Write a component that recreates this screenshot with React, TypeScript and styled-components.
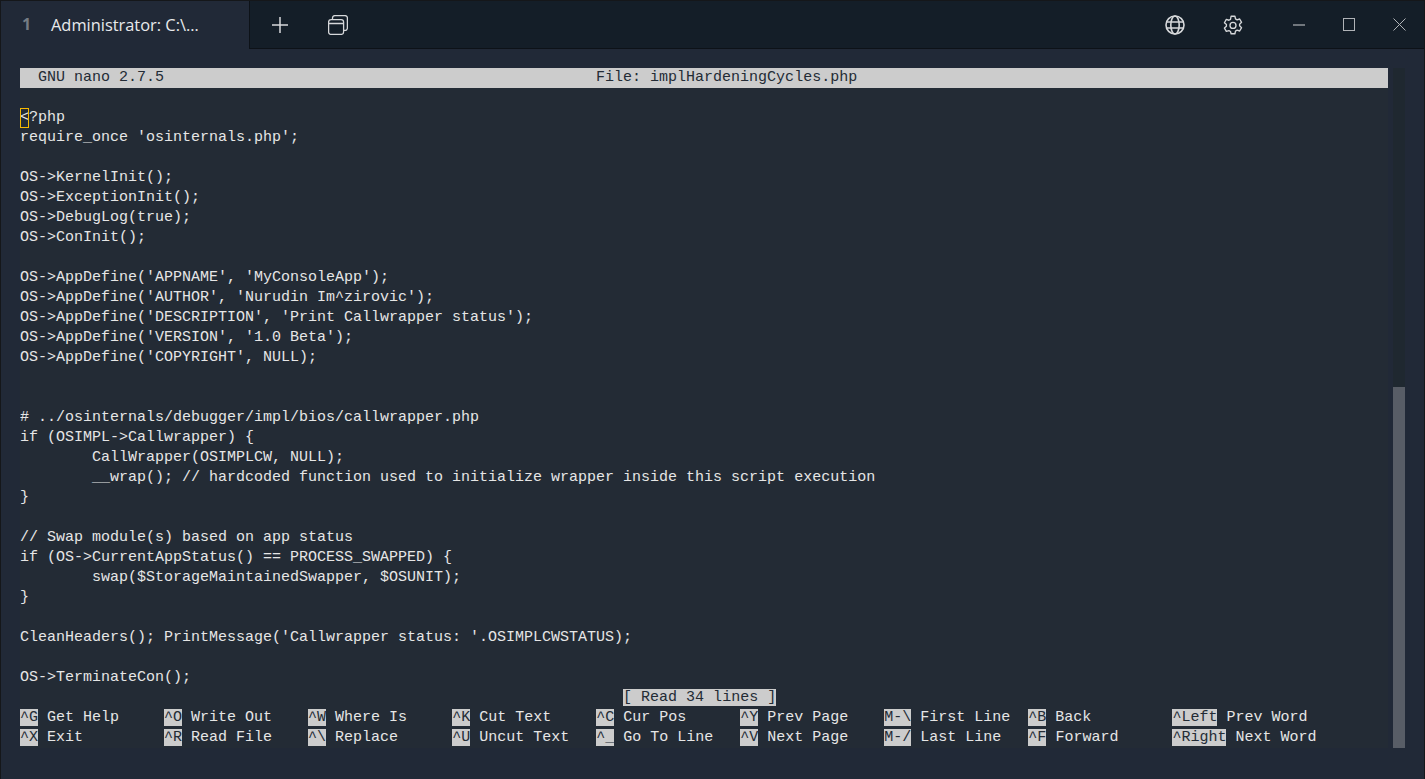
import React from "react";
import styled, { createGlobalStyle } from "styled-components";

const Global = createGlobalStyle`
  html, body { margin: 0; padding: 0; height: 100%; background: #212937; overflow: hidden; }
  #root { height: 100%; }
`;

const Window = styled.div`
  width: 1425px; height: 779px; display: flex; flex-direction: column;
  background: #212937; box-sizing: border-box; border: 1px solid #15171a; border-bottom: 0;
  overflow: hidden; font-family: "Liberation Sans", sans-serif;
`;
const TitleBar = styled.header`
  height: 48px; display: flex; align-items: stretch; background: #141e28; flex: none;
`;
const ActiveTab = styled.div`
  width: 249px; height: 48px; display: flex; align-items: center; background: #212937;
  border-right: 1px solid #0d1218; box-sizing: border-box; padding-left: 21px;
`;
const TabIndex = styled.span`
  color: #757c84; font: 700 16px "Open Sans", sans-serif; width: 29px; position: relative; top: -1px;
`;
const TabTitle = styled.span`
  color: #e8eaec; font: 400 16.4px "Open Sans", sans-serif; white-space: nowrap; position: relative; top: -1px;
`;
const IconButton = styled.button<{ $w: number }>`
  width: ${p => p.$w}px; height: 47px; padding: 0; border: 0; background: transparent;
  display: flex; align-items: center; justify-content: center; color: #d6d8da;
`;
const Spacer = styled.div`flex: 1; border-bottom: 1px solid #0d1218;`;
const LeftTools = styled.div`display: flex; border-bottom: 1px solid #0d1218;`;
const RightTools = styled.div`display: flex; border-bottom: 1px solid #0d1218;`;
const WindowControls = styled.div`display: flex; margin-left: 12px;`;
const Body = styled.main`
  flex: 1; display: flex; padding: 19px 19px 31px 19px; gap: 5px; min-height: 0;
`;
const Terminal = styled.pre`
  margin: 0; width: 1368px; height: 680px; flex: none; overflow: hidden;
  background: #232b35; color: #e6e6e6;
  font: 15px/20px "Liberation Mono", monospace;
`;
const Line = styled.div`height: 20px; white-space: pre; position: relative;`;
const TitleLine = styled(Line)`background: #cccccc; color: #232b35;`;
const Inv = styled.span`background: #cccccc; color: #232b35;`;
const Cursor = styled.span`
  outline: 1px solid #f5b800; outline-offset: -1px; display: inline-block; width: 9px; height: 20px;
`;
const Scrollbar = styled.div`
  width: 12px; height: 680px; flex: none; background: #1f2830; display: flex; flex-direction: column; justify-content: flex-end;
`;
const Thumb = styled.div`height: 361px; background: #585d66;`;

const code = `
<?php
require_once 'osinternals.php';

OS->KernelInit();
OS->ExceptionInit();
OS->DebugLog(true);
OS->ConInit();

OS->AppDefine('APPNAME', 'MyConsoleApp');
OS->AppDefine('AUTHOR', 'Nurudin Im^zirovic');
OS->AppDefine('DESCRIPTION', 'Print Callwrapper status');
OS->AppDefine('VERSION', '1.0 Beta');
OS->AppDefine('COPYRIGHT', NULL);


# ../osinternals/debugger/impl/bios/callwrapper.php
if (OSIMPL->Callwrapper) {
        CallWrapper(OSIMPLCW, NULL);
        __wrap(); // hardcoded function used to initialize wrapper inside this script execution
}

// Swap module(s) based on app status
if (OS->CurrentAppStatus() == PROCESS_SWAPPED) {
        swap($StorageMaintainedSwapper, $OSUNIT);
}

CleanHeaders(); PrintMessage('Callwrapper status: '.OSIMPLCWSTATUS);

OS->TerminateCon();`.split("\n");

const row1: [string, string][] = [["^G","Get Help"],["^O","Write Out"],["^W","Where Is"],["^K","Cut Text"],["^C","Cur Pos"],["^Y","Prev Page"],["M-\\","First Line"],["^B","Back"],["^Left","Prev Word"]];
const row2: [string, string][] = [["^X","Exit"],["^R","Read File"],["^\\","Replace"],["^U","Uncut Text"],["^_","Go To Line"],["^V","Next Page"],["M-/","Last Line"],["^F","Forward"],["^Right","Next Word"]];

const Shortcuts = ({ items }: { items: [string, string][] }) => (
  <Line>
    {items.map(([k, label], i) => {
      const text = " " + label;
      const used = k.length + text.length;
      const pad = i === items.length - 1 ? "" : " ".repeat(Math.max(0, 16 - used));
      return <React.Fragment key={k}><Inv>{k}</Inv>{text}{pad}</React.Fragment>;
    })}
  </Line>
);

export default function App() {
  return (
    <Window>
      <Global />
      <TitleBar>
        <ActiveTab><TabIndex>1</TabIndex><TabTitle>Administrator: C:\…</TabTitle></ActiveTab>
        <LeftTools>
          <IconButton $w={60}>
            <svg width="16" height="16" viewBox="0 0 16 16" stroke="currentColor" strokeWidth="1.5" fill="none"><path d="M8 0v16M0 8h16" /></svg>
          </IconButton>
          <IconButton $w={56}>
            <svg width="20" height="20" viewBox="0 0 20 20" stroke="currentColor" strokeWidth="1.3" fill="none">
              <rect x="0.6" y="4.600" width="15" height="14.800" rx="2.500" />
              <path d="M0.6 8.500h15M4.500 4.500V3a2.400 2.400 0 0 1 2.400-2.400h10A2.400 2.400 0 0 1 19.400 3v10a2.400 2.400 0 0 1-2.400 2.400h-1.400" />
            </svg>
          </IconButton>
        </LeftTools>
        <Spacer />
        <RightTools>
          <IconButton $w={58}>
            <svg width="20" height="20" viewBox="0 0 20 20" stroke="currentColor" strokeWidth="1.6" fill="none">
              <circle cx="10" cy="10" r="9" /><ellipse cx="10" cy="10" rx="4.200" ry="9" /><path d="M1.500 7h17M1.500 13h17" />
            </svg>
          </IconButton>
          <IconButton $w={58}>
            <svg width="20" height="20" viewBox="0 0 24 24" stroke="currentColor" strokeWidth="1.6" fill="none" strokeLinecap="round" strokeLinejoin="round">
              <path d="M9.700 1.500h4.600l.7 3.200 1.900 1.100 3.100-1 2.300 4-2.400 2.200v2l2.400 2.200-2.300 4-3.100-1-1.900 1.100-.7 3.200H9.700L9 19.800l-1.900-1.100-3.100 1-2.300-4 2.400-2.200v-2L1.700 9.300l2.300-4 3.100 1L9 5.200z" />
              <circle cx="12" cy="12.500" r="3.600" />
            </svg>
          </IconButton>
          <WindowControls>
            <IconButton $w={50}>
              <svg width="12" height="2" viewBox="0 0 12 2"><path d="M0 1h12" stroke="#9a9ea3" strokeWidth="1.4" /></svg>
            </IconButton>
            <IconButton $w={50}>
              <svg width="12" height="13" viewBox="0 0 12 13" fill="none"><rect x="0.5" y="0.5" width="11" height="12" stroke="#b0b3b7" strokeWidth="1" /></svg>
            </IconButton>
            <IconButton $w={50}>
              <svg width="13" height="13" viewBox="0 0 13 13" fill="none"><path d="M0.500 0.500l12 12M12.500 0.500l-12 12" stroke="#b0b3b7" strokeWidth="1" /></svg>
            </IconButton>
          </WindowControls>
        </RightTools>
      </TitleBar>
      <Body>
        <Terminal>
          <TitleLine>{"  GNU nano 2.7.5" + " ".repeat(48) + "File: implHardeningCycles.php"}</TitleLine>
          {code.map((l, i) =>
            l.startsWith("<?php")
              ? <Line key={i}><Cursor>{"<"}</Cursor>{"?php"}</Line>
              : <Line key={i}>{l || " "}</Line>
          )}
          <Line>{" ".repeat(67)}<Inv>[ Read 34 lines ]</Inv></Line>
          <Shortcuts items={row1} />
          <Shortcuts items={row2} />
        </Terminal>
        <Scrollbar><Thumb /></Scrollbar>
      </Body>
    </Window>
  );
}
